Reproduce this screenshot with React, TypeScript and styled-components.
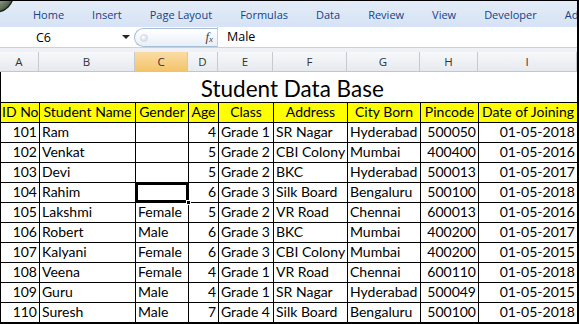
import React from "react";
import styled, { createGlobalStyle } from "styled-components";

const GlobalStyle = createGlobalStyle`
  html, body {
    margin: 0;
    padding: 0;
    background: #ffffff;
  }
  * {
    box-sizing: border-box;
  }
`;

interface studentRow {
  id: number;
  name: string;
  gender: string;
  age: number;
  grade: string;
  address: string;
  city: string;
  pincode: string;
  joined: string;
}

const STUDENTS: studentRow[] = [
  { id: 101, name: "Ram", gender: "", age: 4, grade: "Grade 1", address: "SR Nagar", city: "Hyderabad", pincode: "500050", joined: "01-05-2018" },
  { id: 102, name: "Venkat", gender: "", age: 5, grade: "Grade 2", address: "CBI Colony", city: "Mumbai", pincode: "400400", joined: "01-05-2016" },
  { id: 103, name: "Devi", gender: "", age: 5, grade: "Grade 2", address: "BKC", city: "Hyderabad", pincode: "500013", joined: "01-05-2017" },
  { id: 104, name: "Rahim", gender: "", age: 6, grade: "Grade 3", address: "Silk Board", city: "Bengaluru", pincode: "500100", joined: "01-05-2018" },
  { id: 105, name: "Lakshmi", gender: "Female", age: 5, grade: "Grade 2", address: "VR Road", city: "Chennai", pincode: "600013", joined: "01-05-2016" },
  { id: 106, name: "Robert", gender: "Male", age: 6, grade: "Grade 3", address: "BKC", city: "Mumbai", pincode: "400200", joined: "01-05-2017" },
  { id: 107, name: "Kalyani", gender: "Female", age: 6, grade: "Grade 3", address: "CBI Colony", city: "Mumbai", pincode: "400200", joined: "01-05-2015" },
  { id: 108, name: "Veena", gender: "Female", age: 4, grade: "Grade 1", address: "VR Road", city: "Chennai", pincode: "600110", joined: "01-05-2018" },
  { id: 109, name: "Guru", gender: "Male", age: 4, grade: "Grade 1", address: "SR Nagar", city: "Hyderabad", pincode: "500049", joined: "01-05-2015" },
  { id: 110, name: "Suresh", gender: "Male", age: 7, grade: "Grade 4", address: "Silk Board", city: "Bengaluru", pincode: "500100", joined: "01-05-2018" },
];

// column widths taken from the sheet (A..I)
const COLUMNS = [
  { letter: "A", width: 39 },
  { letter: "B", width: 96 },
  { letter: "C", width: 53 },
  { letter: "D", width: 30 },
  { letter: "E", width: 55 },
  { letter: "F", width: 74 },
  { letter: "G", width: 73 },
  { letter: "H", width: 58 },
  { letter: "I", width: 99 },
];

const HEADINGS = ["ID No", "Student Name", "Gender", "Age", "Class", "Address", "City Born", "Pincode", "Date of Joining"];

const TABS = ["Home", "Insert", "Page Layout", "Formulas", "Data", "Review", "View", "Developer", "Add-Ins"];

const GRID_TEMPLATE = COLUMNS.map((c) => c.width + "px").join(" ");

const App = () => {
  return (
    <>
      <GlobalStyle />
      <Window>
        <OfficeButton width="16" height="14" viewBox="0 0 16 14">
          <defs>
            <radialGradient id="orb" cx="0.3" cy="0.3" r="0.9">
              <stop offset="0" stopColor="#c9d6c0" />
              <stop offset="0.6" stopColor="#7d8f76" />
              <stop offset="1" stopColor="#2d3a2a" />
            </radialGradient>
          </defs>
          <circle cx="-4" cy="-6" r="17" fill="url(#orb)" stroke="#1d261b" strokeWidth="1.5" />
        </OfficeButton>

        <TabStrip>
          {TABS.map((tab) => (
            <Tab key={tab}>{tab}</Tab>
          ))}
        </TabStrip>

        <FormulaBar>
          <NameBox>C6</NameBox>
          <DropArrow />
          <FormulaButtons>
            <Knob />
            <Fx>
              f<sub>x</sub>
            </Fx>
          </FormulaButtons>
          <FormulaInput>Male</FormulaInput>
        </FormulaBar>
        <BarGap />

        <ColumnHeaders>
          {COLUMNS.map((col) => (
            <ColumnLetter key={col.letter} $active={col.letter === "C"}>
              {col.letter}
            </ColumnLetter>
          ))}
        </ColumnHeaders>

        <Sheet>
          <colgroup>
            {COLUMNS.map((col) => (
              <col key={col.letter} style={{ width: col.width }} />
            ))}
          </colgroup>
          <tbody>
            <TitleRow>
              <TitleCell colSpan={9}>Student Data Base</TitleCell>
            </TitleRow>
            <HeadRow>
              {HEADINGS.map((h) => (
                <HeadCell key={h}>{h}</HeadCell>
              ))}
            </HeadRow>
            {STUDENTS.map((s) => (
              <DataRow key={s.id}>
                <Cell $align="right">{s.id}</Cell>
                <Cell>{s.name}</Cell>
                <Cell $selected={s.id === 104}>
                  {s.gender}
                  {s.id === 104 && <FillHandle />}
                </Cell>
                <Cell $align="right">{s.age}</Cell>
                <Cell>{s.grade}</Cell>
                <Cell>{s.address}</Cell>
                <Cell>{s.city}</Cell>
                <Cell $align="right">{s.pincode}</Cell>
                <Cell $align="right">{s.joined}</Cell>
              </DataRow>
            ))}
          </tbody>
        </Sheet>
      </Window>
    </>
  );
};

const Window = styled.div`
  position: relative;
  width: 579px;
  height: 324px;
  overflow: hidden;
  border-top: 1px solid #000;
  border-right: 2px solid #000;
  border-bottom: 2px solid #000;
  background: #fff;
`;

const OfficeButton = styled.svg`
  position: absolute;
  left: 0;
  top: 0;
`;

const TabStrip = styled.div`
  display: flex;
  align-items: center;
  height: 26px;
  padding-left: 19px;
  background: linear-gradient(#e3ecf8, #d6e3f4);
  white-space: nowrap;
  overflow: hidden;
`;

const Tab = styled.span`
  flex-shrink: 0;
  padding: 0 14px;
  font-family: "Open Sans", "DejaVu Sans", sans-serif;
  font-size: 11px;
  color: #15428b;
`;

const FormulaBar = styled.div`
  display: flex;
  align-items: center;
  height: 20px;
  background: #fff;
`;

const NameBox = styled.div`
  width: 118px;
  padding-left: 36px;
  font-family: "Open Sans", "DejaVu Sans", sans-serif;
  font-size: 12.5px;
  color: #000;
`;

const DropArrow = styled.div`
  width: 0;
  height: 0;
  margin: 0 4px 0 4px;
  border-left: 4px solid transparent;
  border-right: 4px solid transparent;
  border-top: 4px solid #222;
`;

const FormulaButtons = styled.div`
  position: relative;
  display: flex;
  align-items: center;
  justify-content: flex-end;
  width: 83px;
  height: 19px;
  padding-right: 4px;
  border: 1px solid #a9bcd6;
  border-right: none;
  border-radius: 10px 0 0 10px;
  background: linear-gradient(#ffffff, #e9eff8);
`;

const Knob = styled.div`
  position: absolute;
  left: 5px;
  top: 5px;
  width: 8px;
  height: 8px;
  border-radius: 50%;
  background: radial-gradient(circle at 35% 35%, #ffffff, #c7d2e0);
  border: 1px solid #d3dbe6;
`;

const Fx = styled.span`
  font-family: "Liberation Serif", "DejaVu Serif", serif;
  font-style: italic;
  font-size: 13px;
  color: #444;
  line-height: 1;

  sub {
    font-size: 9px;
    vertical-align: -1px;
  }
`;

const FormulaInput = styled.div`
  flex: 1;
  height: 20px;
  padding-left: 9px;
  border-left: 1px solid #c4cfdd;
  font-family: "Open Sans", "DejaVu Sans", sans-serif;
  font-size: 12.5px;
  line-height: 19px;
  color: #000;
`;

const BarGap = styled.div`
  height: 5px;
  border-top: 1px solid #c8d3e2;
  background: #eef1f5;
`;

const ColumnHeaders = styled.div`
  display: grid;
  grid-template-columns: ${GRID_TEMPLATE};
  height: 20px;
  border-bottom: 1px solid #c2c7ce;
`;

const ColumnLetter = styled.div<{ $active?: boolean }>`
  display: flex;
  align-items: center;
  justify-content: center;
  border-right: 1px solid #c5cad1;
  background: ${(p) =>
    p.$active ? "linear-gradient(#fbdca6, #f3c46b)" : "linear-gradient(#f7f8fa, #e6e9ee)"};
  font-family: "Open Sans", "DejaVu Sans", sans-serif;
  font-size: 11.5px;
  color: #333;
`;

const Sheet = styled.table`
  width: 577px;
  table-layout: fixed;
  border-collapse: collapse;
  font-family: Lato, "Open Sans", sans-serif;
  font-size: 14px;
  color: #000;
`;

const TitleRow = styled.tr`
  height: 30px;
`;

const TitleCell = styled.td`
  padding: 0 0 0 6px;
  border-left: 1px solid #000;
  text-align: center;
  font-size: 22.5px;
  vertical-align: bottom;
  line-height: 27px;
`;

const HeadRow = styled.tr`
  height: 20px;
  background: #ffff00;
`;

const HeadCell = styled.td`
  padding: 0 1px;
  border: 1px solid #000;
  text-align: center;
  white-space: nowrap;
  overflow: hidden;
  line-height: 18px;
`;

const DataRow = styled.tr`
  height: 20px;
`;

const Cell = styled.td<{ $align?: "left" | "right"; $selected?: boolean }>`
  position: relative;
  padding: 0 2px;
  border: 1px solid #000;
  text-align: ${(p) => p.$align || "left"};
  white-space: nowrap;
  overflow: visible;
  line-height: 18px;
  box-shadow: ${(p) => (p.$selected ? "inset 0 0 0 2px #000" : "none")};
`;

const FillHandle = styled.span`
  position: absolute;
  right: -3px;
  bottom: -3px;
  width: 5px;
  height: 5px;
  background: #000;
  border: 1px solid #fff;
`;

export default App;
